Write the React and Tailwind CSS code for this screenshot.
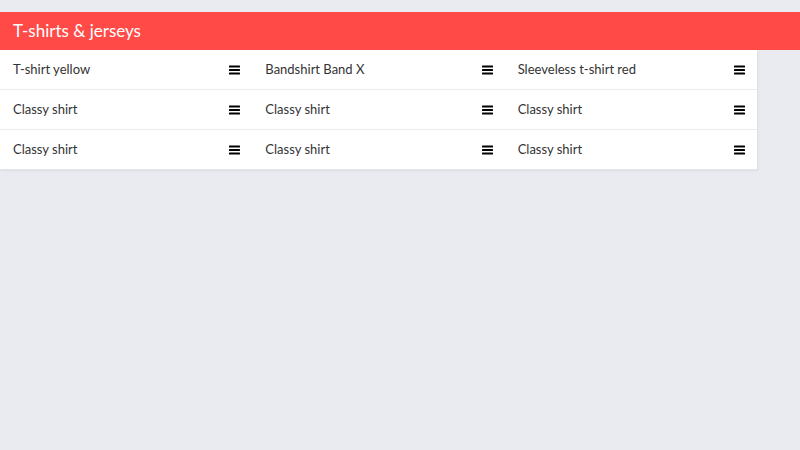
const items = [
  "T-shirt yellow",
  "Bandshirt Band X",
  "Sleeveless t-shirt red",
  "Classy shirt",
  "Classy shirt",
  "Classy shirt",
  "Classy shirt",
  "Classy shirt",
  "Classy shirt",
];

function Bars() {
  return (
    <svg className="w-[11px] h-[10px] text-black" viewBox="0 0 11 10" fill="currentColor" aria-hidden="true">
      <rect x="0" y="0.5" width="11" height="2" rx="0.6" />
      <rect x="0" y="4" width="11" height="2" rx="0.6" />
      <rect x="0" y="7.5" width="11" height="2" rx="0.6" />
    </svg>
  );
}

export default function App() {
  return (
    <div className="min-h-screen bg-[#e9ebf0] pt-3 font-['Lato',sans-serif]">
      {/* Header */}
      <div className="bg-[#ff4a47] h-[38px] flex items-center px-[13px]">
        <h1 className="text-white text-[17px] font-normal">T-shirts &amp; jerseys</h1>
      </div>

      {/* Item grid */}
      <div className="w-[757px] bg-white grid grid-cols-3 shadow-[1px_1px_2px_rgba(0,0,0,0.06)]">
        {items.map((name, i) => (
          <div
            key={i}
            className={`h-[40px] flex items-center justify-between pl-[13px] pr-[12px] ${i < 6 ? "border-b border-[#ececec]" : "border-b border-[#e2e4e8]"}`}
          >
            <span className="text-[13px] text-[#333]">{name}</span>
            <Bars />
          </div>
        ))}
      </div>
    </div>
  );
}
